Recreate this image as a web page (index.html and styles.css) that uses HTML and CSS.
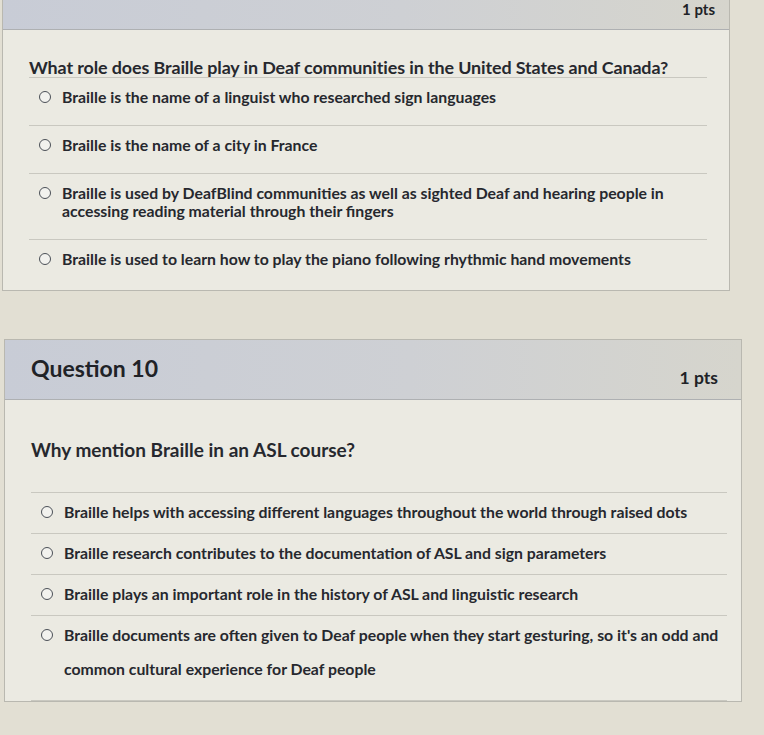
FILE: index.html
```html
<!DOCTYPE html>
<html>
<head>
<meta charset="utf-8">
<link rel="stylesheet" href="styles.css">
</head>
<body>
<div class="page">
  <section class="card card-top">
    <header class="card-head head-top">
      <span class="pts pts-top">1 pts</span>
    </header>
    <div class="card-body body-top">
      <p class="question q-top">What role does Braille play in Deaf communities in the United States and Canada?</p>
      <ul class="answers answers-top">
        <li class="answer"><span class="radio"></span><span class="label">Braille is the name of a linguist who researched sign languages</span></li>
        <li class="answer"><span class="radio"></span><span class="label">Braille is the name of a city in France</span></li>
        <li class="answer"><span class="radio"></span><span class="label">Braille is used by DeafBlind communities as well as sighted Deaf and hearing people in accessing reading material through their fingers</span></li>
        <li class="answer"><span class="radio"></span><span class="label">Braille is used to learn how to play the piano following rhythmic hand movements</span></li>
      </ul>
    </div>
  </section>

  <section class="card card-bottom">
    <header class="card-head head-bottom">
      <h2 class="title">Question 10</h2>
      <span class="pts pts-bottom">1 pts</span>
    </header>
    <div class="card-body body-bottom">
      <p class="question q-bottom">Why mention Braille in an ASL course?</p>
      <ul class="answers answers-bottom">
        <li class="answer"><span class="radio"></span><span class="label">Braille helps with accessing different languages throughout the world through raised dots</span></li>
        <li class="answer"><span class="radio"></span><span class="label">Braille research contributes to the documentation of ASL and sign parameters</span></li>
        <li class="answer"><span class="radio"></span><span class="label">Braille plays an important role in the history of ASL and linguistic research</span></li>
        <li class="answer"><span class="radio"></span><span class="label">Braille documents are often given to Deaf people when they start gesturing, so it's an odd and common cultural experience for Deaf people</span></li>
      </ul>
    </div>
  </section>
</div>
</body>
</html>
```

FILE: styles.css
```css
html, body {
  margin: 0;
  padding: 0;
}
body {
  background: #e2dfd3;
  font-family: Lato, "Liberation Sans", sans-serif;
  color: #26282e;
  width: 764px;
  height: 735px;
  overflow: hidden;
}
.page {
  padding: 0 0 0 2px;
}
.card {
  background: #ebeae2;
  border: 1px solid #b9b8b0;
  box-sizing: border-box;
}
.card-top {
  width: 728px;
  border-top: none;
}
.card-bottom {
  width: 738px;
  margin-left: 2px;
  margin-top: 48px;
}
.card-head {
  background: linear-gradient(90deg, #c8ccd6 0%, #ced0d4 55%, #d6d5cd 100%);
  border-bottom: 1px solid #aeb0b2;
  display: flex;
  justify-content: space-between;
  align-items: center;
}
.head-top {
  height: 30px;
  box-sizing: border-box;
  justify-content: flex-end;
  align-items: flex-start;
  padding: 2px 14px 0 0;
}
.pts-top {
  font-size: 15px;
  line-height: 15px;
}
.head-bottom {
  height: 59px;
  padding: 0 23px 0 26px;
}
.title {
  margin: 0;
  font-size: 23px;
  font-weight: 700;
  color: #202227;
  position: relative;
  top: -2px;
}
.pts {
  font-weight: 700;
  color: #202227;
}
.pts-bottom {
  font-size: 17.5px;
  position: relative;
  top: 8px;
}
.card-body {
  padding: 0 22px 0 26px;
}
.body-bottom {
  padding-right: 14px;
}
.question {
  margin: 0;
  line-height: 20px;
  font-weight: 700;
}
.q-top {
  font-size: 17.9px;
  padding-top: 27px;
  letter-spacing: -0.1px;
}
.q-bottom {
  font-size: 19px;
  padding-top: 40px;
  padding-bottom: 32px;
}
.answers {
  list-style: none;
  margin: 0;
  padding: 0;
}
.answer {
  display: flex;
  align-items: flex-start;
  border-top: 1px solid #c9c8c0;
  font-size: 15.8px;
  font-weight: 700;
}
.answers-top .answer {
  padding: 10px 0 19px;
  line-height: 18px;
}
.answers-top .answer .radio {
  margin-top: 3px;
}
.answers-top .label {
  padding-right: 14px;
}
.answers-bottom .answer {
  padding: 2px 0 4px;
  line-height: 34px;
}
.answers-bottom .answer .radio {
  margin-top: 11px;
}
.answers-bottom .answer:last-child {
  padding-bottom: 14px;
  border-bottom: 1px solid #c9c8c0;
}
.answers-top .answer:last-child {
  padding-bottom: 22px;
}
.radio {
  flex: none;
  width: 10px;
  height: 10px;
  border: 1.5px solid #4b5057;
  border-radius: 50%;
  background: #f2f2ee;
  margin-left: 10px;
  margin-right: 11px;
}
.label {
  flex: 1;
}
```
